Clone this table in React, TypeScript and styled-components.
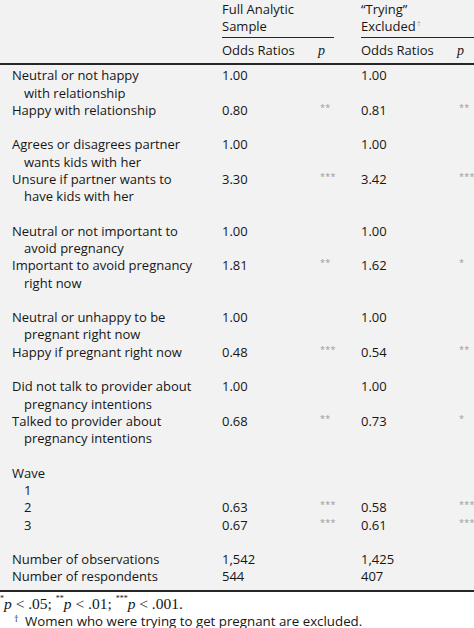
import React from 'react';
import styled, { createGlobalStyle } from 'styled-components';

const Global = createGlobalStyle`
  html, body { margin: 0; padding: 0; background: #ffffff; }
  body { width: 474px; height: 628px; overflow: hidden; }
`;

const Page = styled.div`
  width: 474px;
  height: 628px;
  overflow: hidden;
  font-family: "Open Sans", "DejaVu Sans", sans-serif;
  font-size: 13px;
  color: #161616;
`;

const Panel = styled.div`
  background: #f2f2f2;
  border-bottom: 2px solid #262626;
  padding-bottom: 4px;
`;

const Grid = styled.div`
  display: grid;
  grid-template-columns: 222px 96px 16px 27px 96px 1fr;
  line-height: 17.28px;
`;

const HeadGrid = styled(Grid)`
  border-bottom: 2px solid #262626;
`;

const BodyGrid = styled(Grid)`
  padding-top: 2.4px;
`;

const GroupHead = styled.div<{ $col: string }>`
  grid-column: ${(p) => p.$col};
  border-bottom: 1px solid #262626;
  padding-top: 0.6px;
  padding-bottom: 1.8px;
  white-space: nowrap;
`;

const SubHead = styled.div<{ $col?: string }>`
  ${(p) => (p.$col ? `grid-column: ${p.$col};` : '')}
  padding: 4.4px 0 3.3px;
  white-space: nowrap;
`;

const PItalic = styled.span`
  font-family: "Liberation Serif", "DejaVu Serif", serif;
  font-style: italic;
  font-size: 14px;
`;

const Dagger = styled.sup`
  font-size: 8px;
  color: #6f9cc0;
  vertical-align: top;
  line-height: 10px;
  margin-left: 1px;
`;

const Label = styled.div<{ $indent?: boolean }>`
  grid-column: 1;
  padding-left: 24px;
  text-indent: ${(p) => (p.$indent ? '0' : '-12px')};
  white-space: nowrap;
`;

const Cell = styled.div`
  white-space: nowrap;
`;

const Stars = styled.span`
  display: inline-block;
  font-size: 9px;
  line-height: 9px;
  color: #9a9a9a;
  vertical-align: top;
  margin-top: 1px;
  margin-left: 2px;
  letter-spacing: 0.3px;
`;

const Spacer = styled.div`
  grid-column: 1 / -1;
  height: 17.28px;
`;

const Notes = styled.div`
  padding-top: 2px;
`;

const NoteSerif = styled.div`
  font-family: "Liberation Serif", "DejaVu Serif", serif;
  font-size: 15.5px;
  line-height: 19px;
  white-space: nowrap;
`;

const NoteItalic = styled.i`
  font-style: italic;
`;

const NoteStar = styled.sup`
  font-size: 8px;
  vertical-align: top;
  line-height: 9px;
`;

const NoteSans = styled.div`
  padding-left: 14px;
  font-size: 13.3px;
  line-height: 16px;
  white-space: nowrap;
`;

const NoteMark = styled.span`
  display: inline-block;
  width: 11px;
  font-size: 9px;
  vertical-align: top;
  line-height: 11px;
`;

type Row =
  | { kind: 'spacer' }
  | { kind: 'row'; lines: string[]; indent?: boolean; a?: string; pa?: string; b?: string; pb?: string };

const rows: Row[] = [
  { kind: 'row', lines: ['Neutral or not happy', 'with relationship'], a: '1.00', b: '1.00' },
  { kind: 'row', lines: ['Happy with relationship'], a: '0.80', pa: '**', b: '0.81', pb: '**' },
  { kind: 'spacer' },
  { kind: 'row', lines: ['Agrees or disagrees partner', 'wants kids with her'], a: '1.00', b: '1.00' },
  { kind: 'row', lines: ['Unsure if partner wants to', 'have kids with her'], a: '3.30', pa: '***', b: '3.42', pb: '***' },
  { kind: 'spacer' },
  { kind: 'row', lines: ['Neutral or not important to', 'avoid pregnancy'], a: '1.00', b: '1.00' },
  { kind: 'row', lines: ['Important to avoid pregnancy', 'right now'], a: '1.81', pa: '**', b: '1.62', pb: '*' },
  { kind: 'spacer' },
  { kind: 'row', lines: ['Neutral or unhappy to be', 'pregnant right now'], a: '1.00', b: '1.00' },
  { kind: 'row', lines: ['Happy if pregnant right now'], a: '0.48', pa: '***', b: '0.54', pb: '**' },
  { kind: 'spacer' },
  { kind: 'row', lines: ['Did not talk to provider about', 'pregnancy intentions'], a: '1.00', b: '1.00' },
  { kind: 'row', lines: ['Talked to provider about', 'pregnancy intentions'], a: '0.68', pa: '**', b: '0.73', pb: '*' },
  { kind: 'spacer' },
  { kind: 'row', lines: ['Wave'] },
  { kind: 'row', lines: ['1'], indent: true },
  { kind: 'row', lines: ['2'], indent: true, a: '0.63', pa: '***', b: '0.58', pb: '***' },
  { kind: 'row', lines: ['3'], indent: true, a: '0.67', pa: '***', b: '0.61', pb: '***' },
  { kind: 'spacer' },
  { kind: 'row', lines: ['Number of observations'], a: '1,542', b: '1,425' },
  { kind: 'row', lines: ['Number of respondents'], a: '544', b: '407' },
];

export default function App() {
  return (
    <Page>
      <Global />
      <Panel>
        <HeadGrid>
          <GroupHead $col="2 / 4">
            Full Analytic
            <br />
            Sample
          </GroupHead>
          <GroupHead $col="5 / 7">
            “Trying”
            <br />
            Excluded<Dagger>†</Dagger>
          </GroupHead>
          <SubHead $col="2">Odds Ratios</SubHead>
          <SubHead $col="3">
            <PItalic>p</PItalic>
          </SubHead>
          <SubHead $col="5">Odds Ratios</SubHead>
          <SubHead $col="6">
            <PItalic>p</PItalic>
          </SubHead>
        </HeadGrid>
        <BodyGrid>
          {rows.map((r, i) =>
            r.kind === 'spacer' ? (
              <Spacer key={i} />
            ) : (
              <React.Fragment key={i}>
                <Label $indent={r.indent}>
                  {r.lines.map((l, j) => (
                    <React.Fragment key={j}>
                      {j > 0 && <br />}
                      {l}
                    </React.Fragment>
                  ))}
                </Label>
                <Cell>{r.a}</Cell>
                <Cell>{r.pa && <Stars>{r.pa}</Stars>}</Cell>
                <Cell />
                <Cell>{r.b}</Cell>
                <Cell>{r.pb && <Stars>{r.pb}</Stars>}</Cell>
              </React.Fragment>
            )
          )}
        </BodyGrid>
      </Panel>
      <Notes>
        <NoteSerif>
          <NoteStar>*</NoteStar>
          <NoteItalic>p</NoteItalic> &lt; .05; <NoteStar>**</NoteStar>
          <NoteItalic>p</NoteItalic> &lt; .01; <NoteStar>***</NoteStar>
          <NoteItalic>p</NoteItalic> &lt; .001.
        </NoteSerif>
        <NoteSans>
          <NoteMark>†</NoteMark>Women who were trying to get pregnant are excluded.
        </NoteSans>
      </Notes>
    </Page>
  );
}
